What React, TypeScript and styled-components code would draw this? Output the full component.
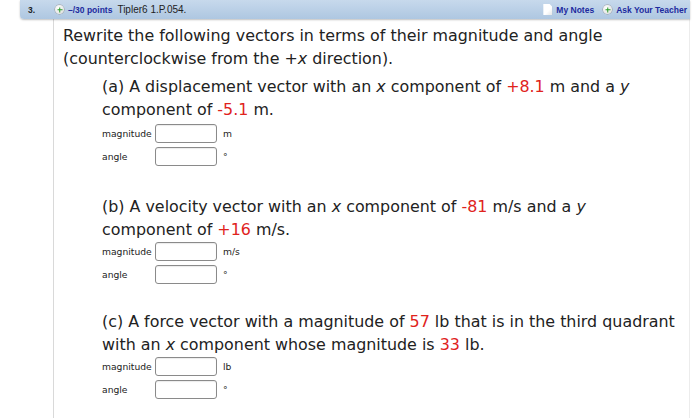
import styled, { createGlobalStyle } from "styled-components";

const GlobalStyle = createGlobalStyle`
  html, body {
    margin: 0;
    padding: 0;
    background: #fff;
  }
`;

const Page = styled.div`
  width: 700px;
  height: 418px;
  overflow: hidden;
  font-family: "DejaVu Sans", Verdana, sans-serif;
  color: #222;
`;

const HeaderBar = styled.div`
  margin-left: 20px;
  width: 670px;
  height: 19px;
  box-sizing: border-box;
  display: flex;
  align-items: center;
  padding: 0 3px 0 8px;
  background: linear-gradient(#c7d9ec, #aec7e1);
  border-bottom-left-radius: 4px;
  box-shadow: 0 1px 2px rgba(0, 0, 0, 0.25);
  font-family: "Liberation Sans", Arial, sans-serif;
  font-size: 8.5px;
  position: relative;
  z-index: 1;
`;

const Number = styled.span`
  font-weight: bold;
  color: #222;
  width: 27px;
`;

const PlusIcon = styled.span`
  display: inline-block;
  width: 9px;
  height: 9px;
  border-radius: 50%;
  background: radial-gradient(circle at 40% 35%, #ffffff, #e4e4e4 70%, #b9b9b9);
  box-shadow: 0 0 0 0.5px #999;
  position: relative;
  margin-right: 4px;
  &::before,
  &::after {
    content: "";
    position: absolute;
    background: #2a9a2a;
    left: 50%;
    top: 50%;
    transform: translate(-50%, -50%);
  }
  &::before {
    width: 5px;
    height: 1.5px;
  }
  &::after {
    width: 1.5px;
    height: 5px;
  }
`;

const Points = styled.span`
  font-weight: bold;
  color: #1d2a9e;
  margin-right: 5px;
`;

const Source = styled.span`
  color: #222;
  font-size: 10px;
`;

const Spacer = styled.span`
  flex: 1;
`;

const NoteIcon = styled.span`
  display: inline-block;
  width: 9px;
  height: 11px;
  background: linear-gradient(135deg, #fff 60%, #e6e6e6);
  box-shadow: 0 0 0 0.5px #bbb;
  margin-right: 4px;
  clip-path: polygon(0 0, 70% 0, 100% 25%, 100% 100%, 0 100%);
`;

const HeaderLink = styled.span<{ $gap?: number }>`
  font-weight: bold;
  color: #1d2a9e;
  margin-right: ${({ $gap }) => $gap ?? 0}px;
`;

const Content = styled.div`
  margin-left: 53px;
  width: 637px;
  height: 399px;
  box-sizing: border-box;
  border-left: 1px solid #d9d9d9;
  border-right: 1px solid #ececec;
  padding: 5px 0 0 9px;
`;

const Paragraph = styled.p<{ $indent?: boolean }>`
  margin: 0;
  font-size: 15.9px;
  line-height: 23px;
  padding-left: ${({ $indent }) => ($indent ? "39px" : "0")};
`;

const Red = styled.span`
  color: #e0231c;
`;

const Part = styled.div<{ $top: number }>`
  margin-top: ${({ $top }) => $top}px;
`;

const Answers = styled.div<{ $top: number }>`
  padding-left: 39px;
  margin-top: ${({ $top }) => $top}px;
  display: flex;
  flex-direction: column;
  gap: 4px;
`;

const AnswerRow = styled.div`
  display: flex;
  align-items: center;
  height: 19px;
  font-size: 9.2px;
`;

const Label = styled.span`
  width: 53px;
`;

const Box = styled.span`
  display: inline-block;
  width: 60px;
  height: 17px;
  border: 1px solid #8a8a8a;
  border-radius: 3px;
  background: #fff;
  box-shadow: inset 0 1px 1px rgba(0, 0, 0, 0.08);
`;

const Unit = styled.span`
  margin-left: 6px;
`;

function Answer({ label, unit }: { label: string; unit: string }) {
  return (
    <AnswerRow>
      <Label>{label}</Label>
      <Box />
      <Unit>{unit}</Unit>
    </AnswerRow>
  );
}

export default function App() {
  return (
    <>
      <GlobalStyle />
      <Page>
        <HeaderBar>
          <Number>3.</Number>
          <PlusIcon />
          <Points>–/30 points</Points>
          <Source>Tipler6 1.P.054.</Source>
          <Spacer />
          <NoteIcon />
          <HeaderLink $gap={9}>My Notes</HeaderLink>
          <PlusIcon />
          <HeaderLink>Ask Your Teacher</HeaderLink>
        </HeaderBar>
        <Content>
          <Paragraph>
            Rewrite the following vectors in terms of their magnitude and angle
            <br />
            (counterclockwise from the +<i>x</i> direction).
          </Paragraph>

          <Part $top={5}>
            <Paragraph $indent>
              (a) A displacement vector with an <i>x</i> component of <Red>+8.1</Red> m and a <i>y</i>
              <br />
              component of <Red>-5.1</Red> m.
            </Paragraph>
            <Answers $top={3}>
              <Answer label="magnitude" unit="m" />
              <Answer label="angle" unit="°" />
            </Answers>
          </Part>

          <Part $top={29}>
            <Paragraph $indent>
              (b) A velocity vector with an <i>x</i> component of <Red>-81</Red> m/s and a <i>y</i>
              <br />
              component of <Red>+16</Red> m/s.
            </Paragraph>
            <Answers $top={1}>
              <Answer label="magnitude" unit="m/s" />
              <Answer label="angle" unit="°" />
            </Answers>
          </Part>

          <Part $top={26}>
            <Paragraph $indent>
              (c) A force vector with a magnitude of <Red>57</Red> lb that is in the third quadrant
              <br />
              with an <i>x</i> component whose magnitude is <Red>33</Red> lb.
            </Paragraph>
            <Answers $top={1}>
              <Answer label="magnitude" unit="lb" />
              <Answer label="angle" unit="°" />
            </Answers>
          </Part>
        </Content>
      </Page>
    </>
  );
}
